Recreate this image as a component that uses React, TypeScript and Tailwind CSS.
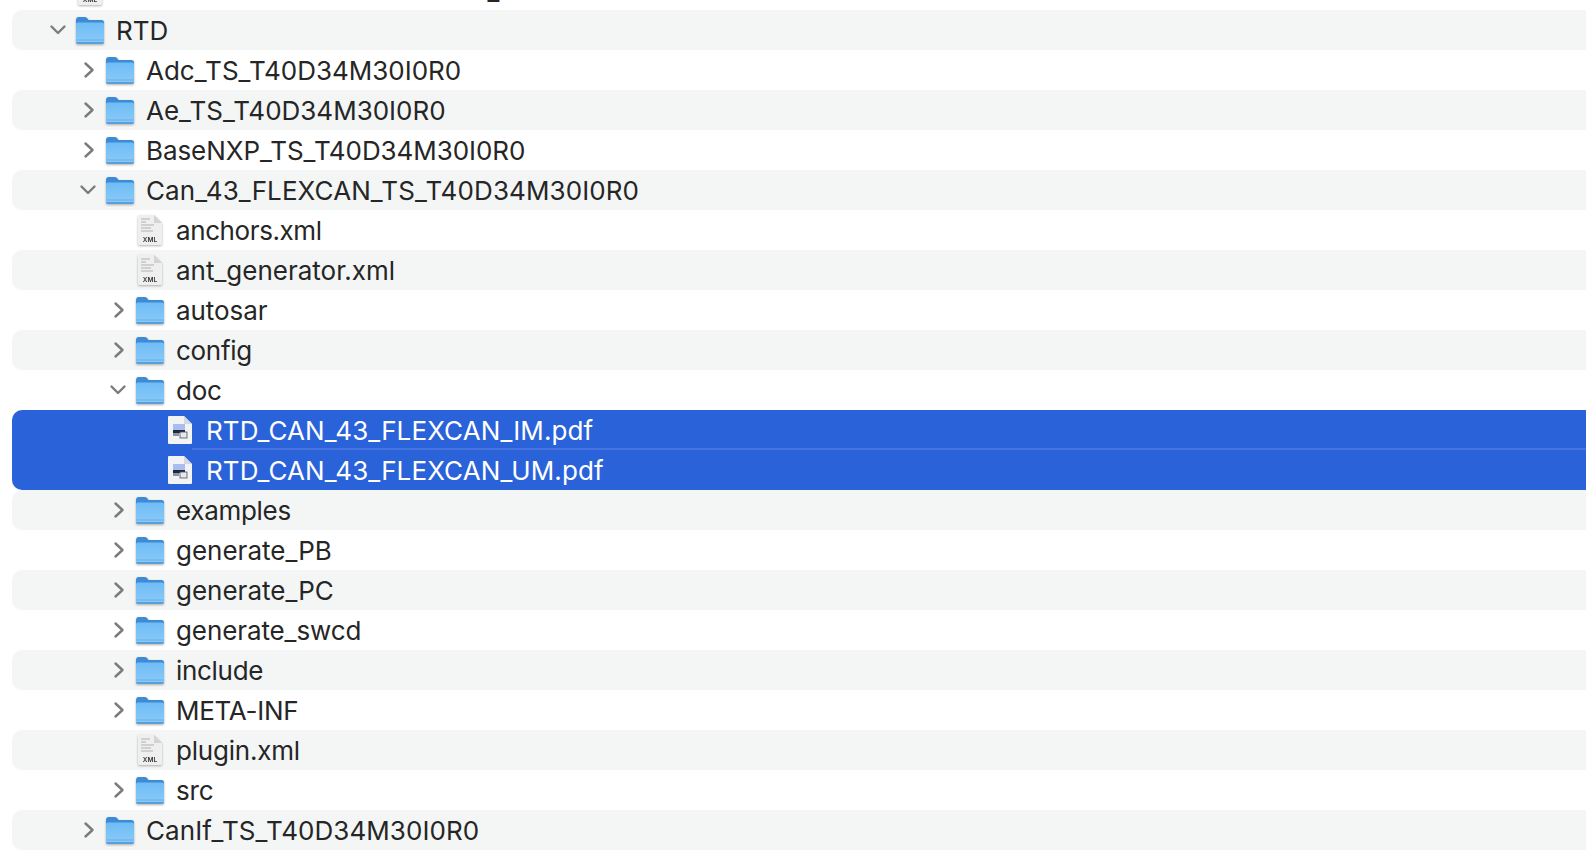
const FONT = "font-['Inter','Noto_Sans',sans-serif]";

type Kind = 'folder' | 'xml' | 'pdf';

interface Row {
  name: string;
  depth: number;
  kind: Kind;
  open?: boolean;
  selected?: boolean;
  track: string;
}

const T_UPPER = 'tracking-[0.1px]';
const T_MID = 'tracking-[0px]';
const T_LOWER = 'tracking-[-0.3px]';

const rows: Row[] = [
  // only the very bottom of this row is on screen
  { name: 'RealTime Drivers ReleaseNote_2023.xml', depth: 0, kind: 'xml', track: T_MID },
  { name: 'RTD', depth: 0, kind: 'folder', open: true, track: T_MID },
  { name: 'Adc_TS_T40D34M30I0R0', depth: 1, kind: 'folder', track: T_MID },
  { name: 'Ae_TS_T40D34M30I0R0', depth: 1, kind: 'folder', track: T_MID },
  { name: 'BaseNXP_TS_T40D34M30I0R0', depth: 1, kind: 'folder', track: 'tracking-[-0.07px]' },
  { name: 'Can_43_FLEXCAN_TS_T40D34M30I0R0', depth: 1, kind: 'folder', open: true, track: T_UPPER },
  { name: 'anchors.xml', depth: 2, kind: 'xml', track: 'tracking-[-0.4px]' },
  { name: 'ant_generator.xml', depth: 2, kind: 'xml', track: T_MID },
  { name: 'autosar', depth: 2, kind: 'folder', track: 'tracking-[-0.05px]' },
  { name: 'config', depth: 2, kind: 'folder', track: T_LOWER },
  { name: 'doc', depth: 2, kind: 'folder', open: true, track: 'tracking-[-0.2px]' },
  { name: 'RTD_CAN_43_FLEXCAN_IM.pdf', depth: 3, kind: 'pdf', selected: true, track: T_UPPER },
  { name: 'RTD_CAN_43_FLEXCAN_UM.pdf', depth: 3, kind: 'pdf', selected: true, track: T_UPPER },
  { name: 'examples', depth: 2, kind: 'folder', track: T_LOWER },
  { name: 'generate_PB', depth: 2, kind: 'folder', track: T_MID },
  { name: 'generate_PC', depth: 2, kind: 'folder', track: T_MID },
  { name: 'generate_swcd', depth: 2, kind: 'folder', track: 'tracking-[-0.1px]' },
  { name: 'include', depth: 2, kind: 'folder', track: T_LOWER },
  { name: 'META-INF', depth: 2, kind: 'folder', track: T_LOWER },
  { name: 'plugin.xml', depth: 2, kind: 'xml', track: 'tracking-[-0.2px]' },
  { name: 'src', depth: 2, kind: 'folder', track: 'tracking-[-0.2px]' },
  { name: 'CanIf_TS_T40D34M30I0R0', depth: 1, kind: 'folder', track: 'tracking-[0.07px]' },
];

function FolderIcon() {
  return (
    <svg width="30" height="28" viewBox="0 0 30 28" className="shrink-0 drop-shadow-[0_1px_1px_rgba(0,0,0,0.3)]">
      <defs>
        <linearGradient id="folderBody" x1="0" y1="0" x2="0" y2="1">
          <stop offset="0" stopColor="#6fbcf5" />
          <stop offset="1" stopColor="#8bcbf9" />
        </linearGradient>
      </defs>
      <path d="M1 4.5Q1 1 3.5 1H10Q11.5 1 12.5 2.5L13.5 4H26.5Q29 4 29 6.5V12H1Z" fill="#3d8ad6" />
      <path d="M1 8Q1 6.5 3 6.5H27Q29 6.5 29 8V26Q29 28 27 28H3Q1 28 1 26Z" fill="url(#folderBody)" />
      <rect x="1" y="23.5" width="28" height="1" fill="#69aee6" />
      <path d="M1 26H29Q29 28 27 28H3Q1 28 1 26Z" fill="#5a9fd8" />
    </svg>
  );
}

function XmlIcon() {
  return (
    <svg width="26" height="32" viewBox="0 0 26 32" className="shrink-0 drop-shadow-[0_1px_1px_rgba(0,0,0,0.3)]">
      <path d="M1 2.5Q1 1 2.5 1H17L25 9V29.5Q25 31 23.5 31H2.5Q1 31 1 29.5Z" fill="#efefef" />
      <path d="M17 1V9H25Z" fill="#d4d4d4" />
      <path d="M4 5h9M4 8h5M4 11h13M4 14h10M4 17h12" stroke="#b0b0b0" strokeWidth="1" />
      <text x="13" y="27.5" textAnchor="middle" fontSize="6.5" fontFamily="Inter, sans-serif" fontWeight="600" fill="#333">
        XML
      </text>
    </svg>
  );
}

function PdfIcon() {
  return (
    <svg width="26" height="30" viewBox="0 0 26 30" className="shrink-0">
      <path d="M1 2Q1 1 2 1H17L25 9V28Q25 29 24 29H2Q1 29 1 28Z" fill="#f2f3f5" />
      <path d="M17 1V9H25Z" fill="#d5d8de" />
      <rect x="6" y="9" width="12" height="6" fill="#a9bdf0" />
      <rect x="6" y="15" width="12" height="3" fill="#1f2937" />
      <rect x="6" y="18" width="6" height="3" fill="#8a94a6" />
      <rect x="13" y="17" width="7" height="6" fill="#e5e7eb" stroke="#4b5563" strokeWidth="0.8" />
    </svg>
  );
}

function Chevron({ open }: { open?: boolean }) {
  return (
    <svg width="18" height="18" viewBox="0 0 18 18" className="shrink-0" fill="none" stroke="#7b7b7b" strokeWidth="2.4" strokeLinecap="round" strokeLinejoin="round">
      {open ? <path d="M2.5 5.5 9 12l6.5-6.5" /> : <path d="M6.5 2.5 13.5 9l-7 6.5" />}
    </svg>
  );
}

function FileRow({ row, striped }: { row: Row; striped: boolean }) {
  const indent = ['pl-[37px]', 'pl-[67px]', 'pl-[97px]', 'pl-[127px]'][row.depth];
  const first = row.selected && row.name.includes('_IM');
  const last = row.selected && row.name.includes('_UM');
  const bg = row.selected ? 'bg-[#2a62d9]' : striped ? 'bg-[#f4f5f5]' : 'bg-white';
  const radius = first ? 'rounded-tl-[10px]' : last ? 'rounded-bl-[10px]' : row.selected ? '' : 'rounded-l-[10px]';

  return (
    <div className={`relative flex h-10 items-center ${indent} ${bg} ${radius}`}>
      <div className="flex w-[25px] shrink-0 justify-start">
        {row.kind === 'folder' && <Chevron open={row.open} />}
      </div>
      <div className="ml-[1px] flex w-[30px] shrink-0 justify-center">
        {row.kind === 'folder' && <FolderIcon />}
        {row.kind === 'xml' && <XmlIcon />}
        {row.kind === 'pdf' && <PdfIcon />}
      </div>
      <span className={`ml-[11px] whitespace-nowrap pt-[2px] text-[26px] leading-none ${row.track} ${row.selected ? 'text-white' : 'text-[#262626]'}`}>
        {row.name}
      </span>
      {first && <div className="absolute bottom-0 left-[180px] right-0 h-[2px] bg-[#4673df]" />}
    </div>
  );
}

export default function App() {
  return (
    <div className={`h-[854px] w-[1586px] overflow-hidden bg-white ${FONT}`}>
      <div className="-mt-[30px] pl-[12px]">
        {rows.map((row, i) => (
          <FileRow key={row.name} row={row} striped={i % 2 === 1} />
        ))}
      </div>
    </div>
  );
}
